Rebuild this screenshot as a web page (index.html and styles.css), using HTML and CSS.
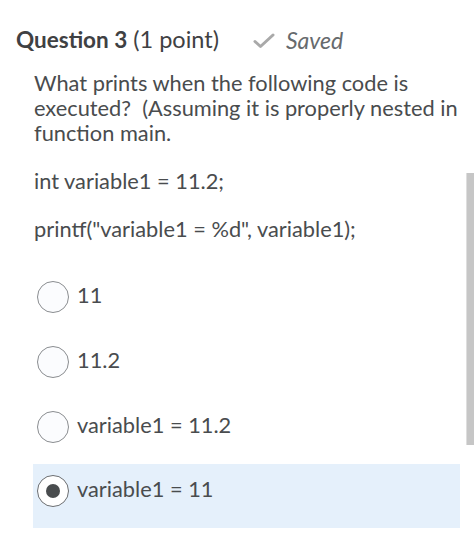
FILE: index.html
```html
<!DOCTYPE html>
<html>
  <head>
    <title>Question 3</title>
    <link rel="stylesheet" href="styles.css">
  </head>
  <body>
    <div class="quiz">
      <div class="header">
        <h2 class="title"><strong>Question 3</strong> (1 point)</h2>
        <div class="saved">
          <svg class="check" width="22" height="16" viewBox="0 0 22 16">
            <path d="M2 8.5 L7.5 13.5 L20 2" fill="none" stroke="#a9a9a9" stroke-width="3" stroke-linecap="round" stroke-linejoin="round"/>
          </svg>
          <span>Saved</span>
        </div>
      </div>

      <div class="question">
        <p class="prompt">What prints when the following code is executed?&nbsp; (Assuming it is properly nested in function main.</p>
        <p class="code">int variable1 = 11.2;</p>
        <p class="code">printf("variable1 = %d", variable1);</p>
      </div>

      <div class="options">
        <label class="option">
          <span class="radio"></span>
          <span class="answer">11</span>
        </label>
        <label class="option">
          <span class="radio"></span>
          <span class="answer">11.2</span>
        </label>
        <label class="option">
          <span class="radio"></span>
          <span class="answer">variable1 = 11.2</span>
        </label>
        <label class="option selected">
          <span class="radio"></span>
          <span class="answer">variable1 = 11</span>
        </label>
      </div>

      <div class="scrollbar"></div>
    </div>
  </body>
</html>
```

FILE: styles.css
```css
body {
  margin: 0;
  background: #ffffff;
  font-family: Lato, "Open Sans", sans-serif;
  color: #494c4e;
}

.quiz {
  position: relative;
  width: 474px;
  height: 537px;
  overflow: hidden;
}

.header {
  display: flex;
  align-items: baseline;
  padding: 24px 0 0 16px;
}

.title {
  margin: 0;
  font-size: 23.5px;
  line-height: 30px;
  font-weight: 400;
  color: #3f4143;
}

.title strong {
  font-weight: 700;
  font-size: 22.5px;
}

.saved {
  display: flex;
  align-items: center;
  margin-left: 34px;
  font-size: 23px;
  font-style: italic;
  color: #666a6d;
}

.check {
  margin-right: 11px;
  position: relative;
  top: 1px;
}

.question {
  padding: 15px 0 0 34px;
  width: 430px;
}

.question p {
  margin: 0;
  font-size: 21.8px;
  line-height: 25px;
}

.question .code {
  margin-top: 23px;
}

.options {
  margin-top: 29px;
  margin-left: 33px;
  width: 427px;
}

.option {
  display: flex;
  align-items: flex-start;
  height: 65px;
  padding-left: 4px;
  box-sizing: border-box;
}

.radio {
  width: 32px;
  height: 32px;
  margin-top: 11px;
  box-sizing: border-box;
  border: 1.5px solid #8a8d90;
  border-radius: 50%;
  background: #fbfcfe;
  display: flex;
  align-items: center;
  justify-content: center;
}

.answer {
  margin-left: 8px;
  margin-top: 12px;
  font-size: 21.8px;
  line-height: 25px;
}

.option.selected {
  background: #e5f0fb;
  height: 64px;
  margin-top: -1px;
}

.option.selected .radio {
  border-color: #6b6e71;
  background: #ffffff;
}

.option.selected .radio::after {
  content: "";
  width: 14px;
  height: 14px;
  border-radius: 50%;
  background: #494c4e;
}

.scrollbar {
  position: absolute;
  left: 466px;
  top: 173px;
  width: 7px;
  height: 272px;
  background: #c6c6c6;
  border-left: 1px solid #dedede;
}
```
